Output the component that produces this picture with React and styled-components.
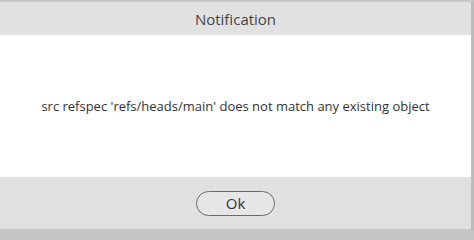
import styled, { createGlobalStyle } from 'styled-components'

const GlobalStyle = createGlobalStyle`
  html, body {
    margin: 0;
    padding: 0;
    background: #c4c4c4;
  }
`

const Dialog = styled.div`
  width: 474px;
  height: 231px;
  box-sizing: border-box;
  display: flex;
  flex-direction: column;
  border-top: 2px solid #c8c8c8;
  border-right: 3px solid #bcbcbc;
  border-bottom: 2px solid #c6c6c6;
  border-top-right-radius: 4px;
  background: #e0e0e0;
  font-family: 'Open Sans', 'Noto Sans', sans-serif;
`

const Header = styled.header`
  height: 33px;
  flex: none;
  display: flex;
  align-items: center;
  justify-content: center;
  background: #e1e1e1;
  color: #454545;
  font-size: 15px;
  border-top-right-radius: 4px;
`

const Body = styled.main`
  flex: 1 1 auto;
  display: flex;
  align-items: center;
  justify-content: center;
  background: #ffffff;
  color: #333333;
  font-size: 13px;
`

const Footer = styled.footer`
  height: 52px;
  flex: none;
  display: flex;
  align-items: center;
  justify-content: center;
  background: #e0e0e0;
`

const Button = styled.button`
  width: 79px;
  height: 25px;
  border: 1.5px solid #6a6a6a;
  border-radius: 13px;
  background: #e6e6e6;
  color: #333333;
  font-family: inherit;
  font-size: 15px;
  line-height: 1;
  padding: 0;
  cursor: pointer;
`

export default function App() {
  return (
    <>
      <GlobalStyle />
      <Dialog>
        <Header>Notification</Header>
        <Body>src refspec 'refs/heads/main' does not match any existing object</Body>
        <Footer>
          <Button type="button">Ok</Button>
        </Footer>
      </Dialog>
    </>
  )
}
